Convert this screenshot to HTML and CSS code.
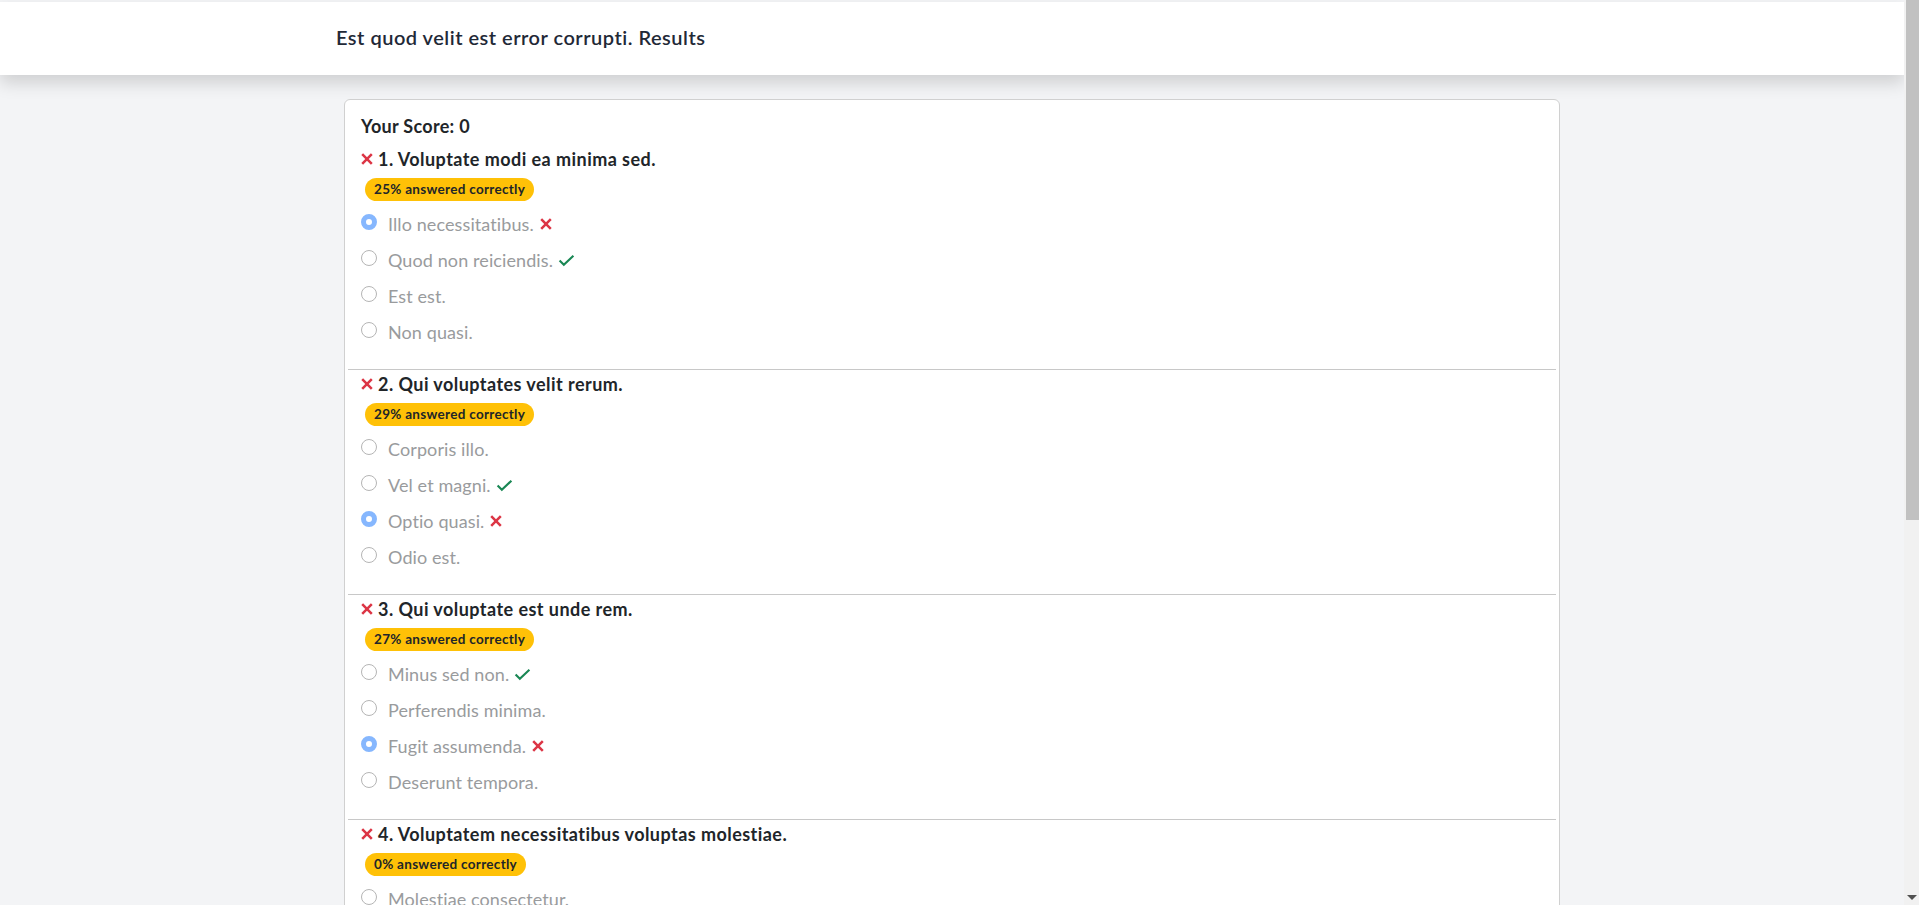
FILE: index.html
```html
<!DOCTYPE html>
<html lang="en">
<head>
    <meta charset="UTF-8">
    <meta name="viewport" content="width=device-width, initial-scale=1.0">
    <title>Est quod velit est error corrupti. Results</title>
    <link rel="stylesheet" href="styles.css">
</head>
<body>
    <header class="page-header">
        <div class="header-inner">
            <h2 class="header-title">Est quod velit est error corrupti. Results</h2>
        </div>
    </header>

    <main class="container">
        <div class="results-card">
            <div class="score">Your Score: 0</div>

            <!-- question 1 -->
            <div class="question">
                <div class="question-title">
                    <svg class="icon-wrong" viewBox="0 0 10 10"><path d="M1 1L9 9M9 1L1 9"/></svg>
                    <span>1. Voluptate modi ea minima sed.</span>
                </div>
                <span class="badge">25% answered correctly</span>
                <div class="options">
                    <label class="option"><input type="radio" class="radio" name="q1" checked disabled><span>Illo necessitatibus.</span><svg class="mark-wrong" viewBox="0 0 10 10"><path d="M1 1L9 9M9 1L1 9"/></svg></label>
                    <label class="option"><input type="radio" class="radio" name="q1" disabled><span>Quod non reiciendis.</span><svg class="mark-right" viewBox="0 0 16 12"><path d="M1.5 6L5.5 10L14.5 1.5"/></svg></label>
                    <label class="option"><input type="radio" class="radio" name="q1" disabled><span>Est est.</span></label>
                    <label class="option"><input type="radio" class="radio" name="q1" disabled><span>Non quasi.</span></label>
                </div>
            </div>
            <hr>

            <!-- question 2 -->
            <div class="question">
                <div class="question-title">
                    <svg class="icon-wrong" viewBox="0 0 10 10"><path d="M1 1L9 9M9 1L1 9"/></svg>
                    <span>2. Qui voluptates velit rerum.</span>
                </div>
                <span class="badge">29% answered correctly</span>
                <div class="options">
                    <label class="option"><input type="radio" class="radio" name="q2" disabled><span>Corporis illo.</span></label>
                    <label class="option"><input type="radio" class="radio" name="q2" disabled><span>Vel et magni.</span><svg class="mark-right" viewBox="0 0 16 12"><path d="M1.5 6L5.5 10L14.5 1.5"/></svg></label>
                    <label class="option"><input type="radio" class="radio" name="q2" checked disabled><span>Optio quasi.</span><svg class="mark-wrong" viewBox="0 0 10 10"><path d="M1 1L9 9M9 1L1 9"/></svg></label>
                    <label class="option"><input type="radio" class="radio" name="q2" disabled><span>Odio est.</span></label>
                </div>
            </div>
            <hr>

            <!-- question 3 -->
            <div class="question">
                <div class="question-title">
                    <svg class="icon-wrong" viewBox="0 0 10 10"><path d="M1 1L9 9M9 1L1 9"/></svg>
                    <span>3. Qui voluptate est unde rem.</span>
                </div>
                <span class="badge">27% answered correctly</span>
                <div class="options">
                    <label class="option"><input type="radio" class="radio" name="q3" disabled><span>Minus sed non.</span><svg class="mark-right" viewBox="0 0 16 12"><path d="M1.5 6L5.5 10L14.5 1.5"/></svg></label>
                    <label class="option"><input type="radio" class="radio" name="q3" disabled><span>Perferendis minima.</span></label>
                    <label class="option"><input type="radio" class="radio" name="q3" checked disabled><span>Fugit assumenda.</span><svg class="mark-wrong" viewBox="0 0 10 10"><path d="M1 1L9 9M9 1L1 9"/></svg></label>
                    <label class="option"><input type="radio" class="radio" name="q3" disabled><span>Deserunt tempora.</span></label>
                </div>
            </div>
            <hr>

            <!-- question 4 -->
            <div class="question">
                <div class="question-title">
                    <svg class="icon-wrong" viewBox="0 0 10 10"><path d="M1 1L9 9M9 1L1 9"/></svg>
                    <span>4. Voluptatem necessitatibus voluptas molestiae.</span>
                </div>
                <span class="badge">0% answered correctly</span>
                <div class="options">
                    <label class="option"><input type="radio" class="radio" name="q4" disabled><span>Molestiae consectetur.</span></label>
                    <label class="option"><input type="radio" class="radio" name="q4" disabled><span>Aut quia.</span><svg class="mark-right" viewBox="0 0 16 12"><path d="M1.5 6L5.5 10L14.5 1.5"/></svg></label>
                    <label class="option"><input type="radio" class="radio" name="q4" checked disabled><span>Sit rerum.</span><svg class="mark-wrong" viewBox="0 0 10 10"><path d="M1 1L9 9M9 1L1 9"/></svg></label>
                    <label class="option"><input type="radio" class="radio" name="q4" disabled><span>Et facilis.</span></label>
                </div>
            </div>
            <hr>

            <!-- question 5 -->
            <div class="question">
                <div class="question-title">
                    <svg class="icon-wrong" viewBox="0 0 10 10"><path d="M1 1L9 9M9 1L1 9"/></svg>
                    <span>5. Nihil dolores aut quo.</span>
                </div>
                <span class="badge">33% answered correctly</span>
                <div class="options">
                    <label class="option"><input type="radio" class="radio" name="q5" checked disabled><span>Quia omnis.</span><svg class="mark-wrong" viewBox="0 0 10 10"><path d="M1 1L9 9M9 1L1 9"/></svg></label>
                    <label class="option"><input type="radio" class="radio" name="q5" disabled><span>Ipsa voluptas.</span></label>
                    <label class="option"><input type="radio" class="radio" name="q5" disabled><span>Eum vel.</span><svg class="mark-right" viewBox="0 0 16 12"><path d="M1.5 6L5.5 10L14.5 1.5"/></svg></label>
                    <label class="option"><input type="radio" class="radio" name="q5" disabled><span>Rem qui.</span></label>
                </div>
            </div>
            <hr>

            <!-- question 6 -->
            <div class="question">
                <div class="question-title">
                    <svg class="icon-wrong" viewBox="0 0 10 10"><path d="M1 1L9 9M9 1L1 9"/></svg>
                    <span>6. Et sint ut explicabo.</span>
                </div>
                <span class="badge">17% answered correctly</span>
                <div class="options">
                    <label class="option"><input type="radio" class="radio" name="q6" disabled><span>Dolorem eos.</span></label>
                    <label class="option"><input type="radio" class="radio" name="q6" checked disabled><span>Magnam aut.</span><svg class="mark-wrong" viewBox="0 0 10 10"><path d="M1 1L9 9M9 1L1 9"/></svg></label>
                    <label class="option"><input type="radio" class="radio" name="q6" disabled><span>Facere non.</span></label>
                    <label class="option"><input type="radio" class="radio" name="q6" disabled><span>Velit ut.</span><svg class="mark-right" viewBox="0 0 16 12"><path d="M1.5 6L5.5 10L14.5 1.5"/></svg></label>
                </div>
            </div>
        </div>
    </main>

    <!-- window scrollbar, as seen in the screenshot -->
    <div class="fake-scrollbar">
        <div class="fake-thumb"></div>
        <span class="fake-arrow"></span>
    </div>
</body>
</html>
```

FILE: styles.css
```css
body {
    margin: 0 15px 0 0;
    background: #f3f4f6;
    font-family: Lato, 'Noto Sans', sans-serif;
    color: #212529;
}
.page-header {
    position: relative;
    margin-top: 2px;
    background: #fff;
    box-shadow: 0 8px 16px rgba(0,0,0,0.15);
}
.header-inner {
    max-width: 1280px;
    margin: 0 auto;
    padding: 23px 24px 25px;
    box-sizing: border-box;
}
.header-title {
    margin: 0;
    font-size: 20px;
    font-weight: 600;
    line-height: 25px;
    letter-spacing: 0.5px;
    color: #1f2937;
}
.container {
    max-width: 1280px;
    margin: 0 auto;
    padding: 24px 32px;
    box-sizing: border-box;
}
.results-card {
    background: #fff;
    border: 1px solid #d0d0d0;
    border-radius: 6px;
    padding: 0 3px;
}
.score {
    padding: 15px 13px 0;
    margin-bottom: 8px;
    font-size: 18px;
    font-weight: 700;
    line-height: 22px;
    letter-spacing: 0.3px;
}
.question {
    padding: 3px 13px 19px;
}
.question-title {
    display: flex;
    align-items: center;
    gap: 5px;
    font-size: 18px;
    font-weight: 700;
    line-height: 22px;
    letter-spacing: 0.45px;
}
.icon-wrong {
    width: 12px;
    height: 12px;
    flex: none;
}
.icon-wrong path,
.mark-wrong path {
    stroke: #dc3545;
    stroke-width: 2.1;
    fill: none;
}
.badge {
    display: inline-block;
    margin: 8px 0 0 4px;
    padding: 5px 9px;
    border-radius: 50rem;
    background: #ffc107;
    color: #212529;
    font-size: 13.5px;
    font-weight: 700;
    line-height: 13px;
    letter-spacing: 0.3px;
}
.options {
    margin-top: 5px;
}
.option {
    display: flex;
    align-items: center;
    height: 36px;
    font-size: 18px;
    color: #999b9d;
    letter-spacing: 0.1px;
}
.radio {
    appearance: none;
    -webkit-appearance: none;
    flex: none;
    width: 16px;
    height: 16px;
    margin: 0 11px 4px 0;
    border: 1px solid #b5b5b5;
    border-radius: 50%;
    background: #fff;
    box-sizing: border-box;
}
.radio:checked {
    border: 5px solid #86b7fe;
}
.mark-wrong {
    width: 12px;
    height: 12px;
    margin-left: 6px;
}
.mark-right {
    width: 17px;
    height: 13px;
    margin-left: 5px;
}
.mark-right path {
    stroke: #198754;
    stroke-width: 2;
    fill: none;
}
hr {
    margin: 0;
    border: 0;
    border-top: 1px solid #c8c8c8;
}
.fake-scrollbar {
    position: fixed;
    top: 0;
    right: 0;
    bottom: 0;
    width: 15px;
    background: #f1f1f1;
}
.fake-thumb {
    height: 520px;
    margin-left: 2px;
    background: #c1c1c1;
}
.fake-arrow {
    position: absolute;
    left: 3px;
    bottom: 5px;
    border-left: 5px solid transparent;
    border-right: 5px solid transparent;
    border-top: 5px solid #505050;
}
```
